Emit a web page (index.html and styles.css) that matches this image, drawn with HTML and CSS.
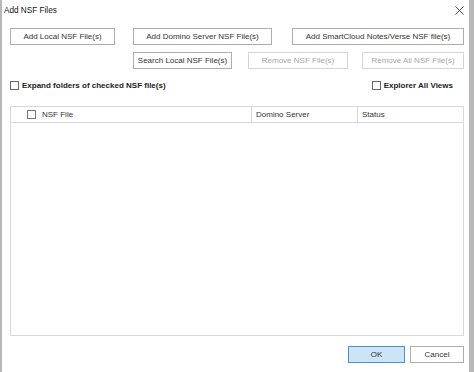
FILE: index.html
```html
<!DOCTYPE html>
<html>
<head>
<meta charset="utf-8">
<link rel="stylesheet" href="styles.css">
</head>
<body>
<div class="window">
  <div class="titlebar">
    <span class="title">Add NSF Files</span>
    <svg class="close" width="10" height="10" viewBox="0 0 10 10"><path d="M0.5 0.5L9.5 9.5M9.5 0.5L0.5 9.5" stroke="#333" stroke-width="1"/></svg>
  </div>
  <div class="content">
    <div class="btnrow row1">
      <button class="btn b-local">Add Local NSF File(s)</button>
      <button class="btn b-domino">Add Domino Server NSF File(s)</button>
      <button class="btn b-cloud">Add SmartCloud Notes/Verse NSF file(s)</button>
    </div>
    <div class="btnrow row2">
      <button class="btn b-search">Search Local NSF File(s)</button>
      <button class="btn b-remove" disabled>Remove NSF File(s)</button>
      <button class="btn b-removeall" disabled>Remove All NSF File(s)</button>
    </div>
    <div class="checkrow">
      <label class="check"><span class="box"></span>Expand folders of checked NSF file(s)</label>
      <label class="check"><span class="box"></span>Explorer All Views</label>
    </div>
    <div class="table">
      <div class="thead">
        <div class="th col-file"><span class="box"></span>NSF File</div>
        <div class="th col-server">Domino Server</div>
        <div class="th col-status">Status</div>
      </div>
      <div class="tbody"></div>
    </div>
    <div class="footer">
      <button class="btn ok">OK</button>
      <button class="btn cancel">Cancel</button>
    </div>
  </div>
</div>
</body>
</html>
```
FILE: styles.css
```css
* { box-sizing: border-box; }
html, body { margin: 0; padding: 0; background: #fff; }
body { font-family: "Liberation Sans", Arial, sans-serif; font-size: 8px; color: #2a2a2a; }
.window {
  width: 474px; height: 372px;
  border-left: 2px solid #b8b8b8;
  border-right: 5px solid #b8b8b8;
  display: flex; flex-direction: column;
  overflow: hidden;
}
.titlebar {
  height: 20px; display: flex; align-items: center; justify-content: space-between;
  padding: 0 5px 0 2px;
}
.title { font-size: 8.2px; color: #111; }
.close { margin-top: 1px; width: 9px; height: 9px; }
.content { padding: 8px 5px 0 8px; display: flex; flex-direction: column; flex: 1; }
.btnrow { display: flex; height: 17px; }
.row2 { margin-top: 7px; }
.btn {
  font-family: inherit; font-size: 8px; color: #333;
  height: 17px; padding: 0; background: #fff;
  border: 1px solid #adadad; border-radius: 0;
  display: flex; align-items: center; justify-content: center;
  white-space: nowrap; line-height: 1;
}
.btn[disabled] { color: #a8a8a8; border-color: #d4d4d4; }
.b-local { width: 105px; }
.b-domino { width: 139px; margin-left: 18px; }
.b-cloud { width: 172px; margin-left: 20px; }
.b-search { width: 99px; margin-left: 123px; }
.b-remove { width: 100px; margin-left: 16px; }
.b-removeall { width: 102px; margin-left: 14px; }
.checkrow {
  display: flex; justify-content: space-between; margin-top: 11px; height: 11px; align-items: center;
  padding-right: 11px;
}
.check { display: flex; align-items: center; font-weight: bold; color: #222; font-size: 8px; }
.box { width: 9px; height: 9px; border: 1px solid #666; background: #fff; margin-right: 3px; display: inline-block; }
.table {
  margin-top: 15px; height: 230px; border: 1px solid #d8d8d8; display: flex; flex-direction: column;
}
.thead { display: flex; height: 16px; border-bottom: 1px solid #d8d8d8; }
.th { display: flex; align-items: center; font-size: 8px; color: #333; padding-left: 4px; }
.col-file { width: 241px; padding-left: 16px; border-right: 1px solid #d8d8d8; }
.col-file .box { border-color: #777; margin-right: 6px; }
.col-server { width: 106px; border-right: 1px solid #d8d8d8; }
.col-status { flex: 1; }
.tbody { flex: 1; }
.footer { display: flex; justify-content: flex-end; margin-top: 10px; }
.ok { width: 57px; background: #cce4f7; border-color: #4a8fd6; }
.cancel { width: 54px; margin-left: 5px; }
```
